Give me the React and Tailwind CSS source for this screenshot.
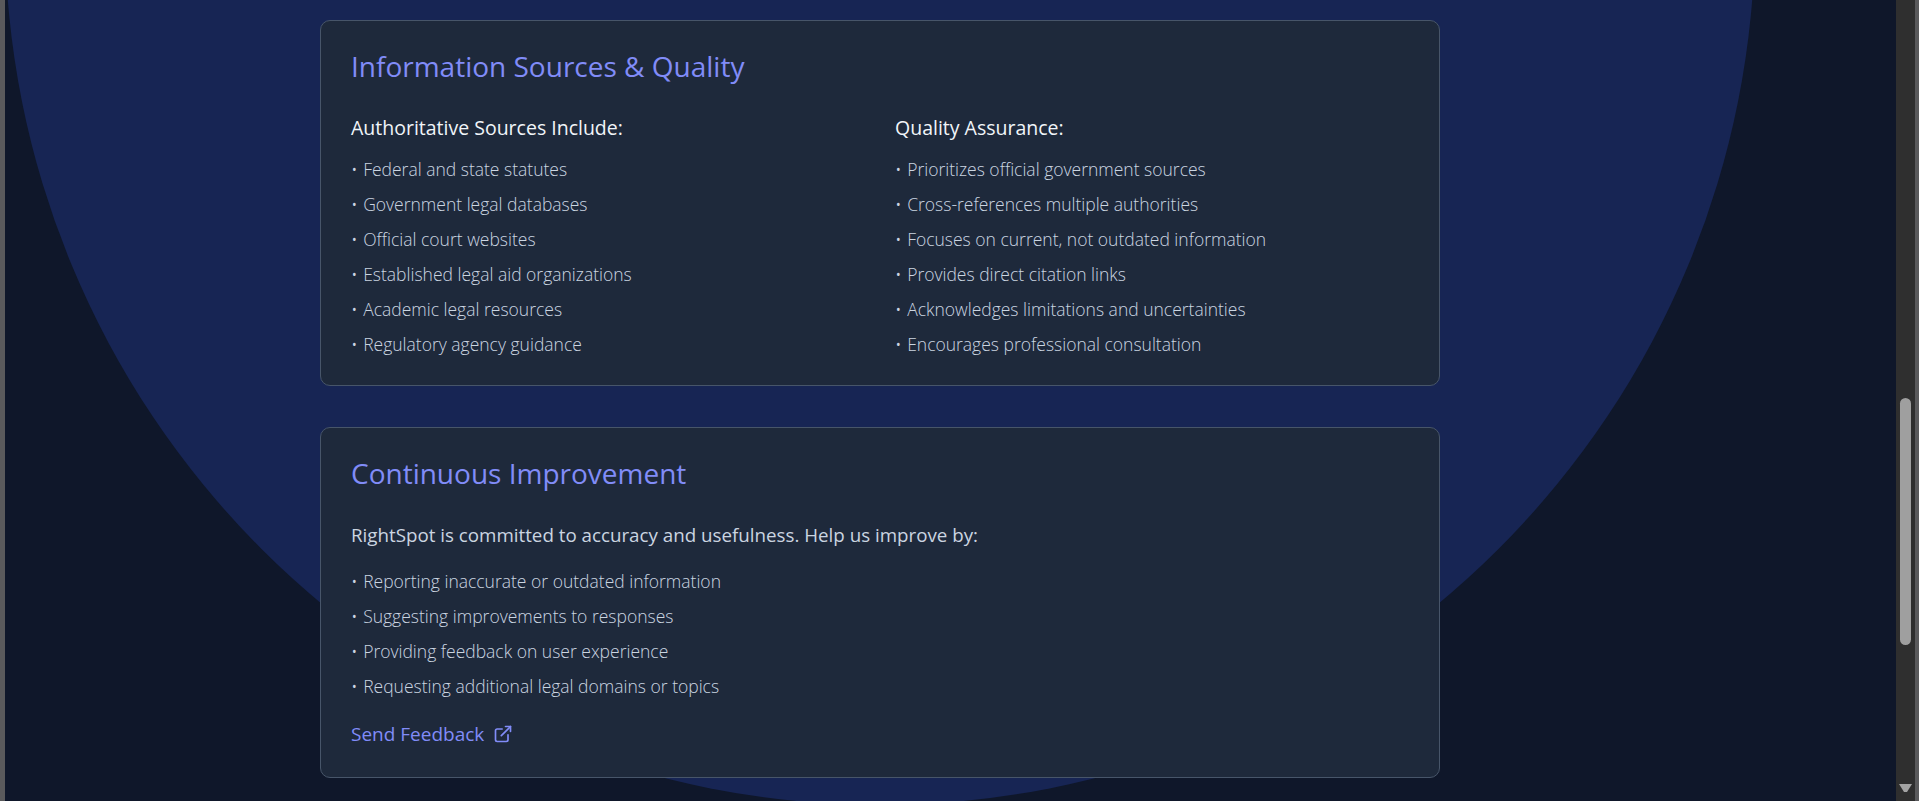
import { ExternalLink } from "lucide-react";

const sources = [
  "Federal and state statutes",
  "Government legal databases",
  "Official court websites",
  "Established legal aid organizations",
  "Academic legal resources",
  "Regulatory agency guidance",
];

const quality = [
  "Prioritizes official government sources",
  "Cross-references multiple authorities",
  "Focuses on current, not outdated information",
  "Provides direct citation links",
  "Acknowledges limitations and uncertainties",
  "Encourages professional consultation",
];

const improve = [
  "Reporting inaccurate or outdated information",
  "Suggesting improvements to responses",
  "Providing feedback on user experience",
  "Requesting additional legal domains or topics",
];

function BulletList({ items }) {
  return (
    <ul className="flex flex-col gap-[10px] text-[17.5px] leading-[25px] font-light text-[#cbd5e1]">
      {items.map(item => (
        <li key={item}>
          <span className="mr-[1px]">•</span> {item}
        </li>
      ))}
    </ul>
  );
}

function Card({ title, children }) {
  return (
    <section className="rounded-[10px] border border-[#475569] bg-[#1e293b] px-[30px] pt-[30px] pb-[28px]">
      <h2 className="mb-[31px] text-[28px] leading-[31px] text-[#818cf8]">{title}</h2>
      {children}
    </section>
  );
}

export default function App() {
  return (
    <div className="flex h-[801px] w-full overflow-hidden bg-[#5a5a5c] font-['Open_Sans','Liberation_Sans',sans-serif]">
      <div className="w-[5px] shrink-0" />
      <main className="relative flex-1 overflow-hidden bg-[#0f172a]">
        <div className="absolute left-0 top-[-945px] h-[1750px] w-[1750px] rounded-full bg-[#172554]" />
        <div className="relative ml-[315px] flex w-[1120px] flex-col gap-[41px] pt-[20px]">
          <Card title="Information Sources & Quality">
            <div className="grid grid-cols-2 gap-[30px]">
              <div>
                <h3 className="mb-[14px] text-[19.5px] leading-[30px] font-medium text-[#f1f5f9]">Authoritative Sources Include:</h3>
                <BulletList items={sources} />
              </div>
              <div>
                <h3 className="mb-[14px] text-[19.5px] leading-[30px] font-medium text-[#f1f5f9]">Quality Assurance:</h3>
                <BulletList items={quality} />
              </div>
            </div>
          </Card>
          <Card title="Continuous Improvement">
            <p className="mb-[19px] text-[18.75px] leading-[30px] text-[#cbd5e1]">
              RightSpot is committed to accuracy and usefulness. Help us improve by:
            </p>
            <BulletList items={improve} />
            <a href="#" className="mt-[20px] inline-flex items-center gap-[9px] text-[19px] leading-[30px] text-[#818cf8]">
              Send Feedback
              <ExternalLink size={20} />
            </a>
          </Card>
        </div>
      </main>
      <div className="flex w-[19px] shrink-0 flex-col items-center bg-[#2f2f2f] pt-[398px]">
        <div className="h-[247px] w-[11px] rounded-full bg-[#9f9f9f]" />
        <svg className="mt-[139px]" width="13" height="9" viewBox="0 0 13 9">
          <path d="M0 0H13L8 8H5Z" fill="#a3a3a3" />
        </svg>
      </div>
      <div className="w-[4px] shrink-0" />
    </div>
  );
}
